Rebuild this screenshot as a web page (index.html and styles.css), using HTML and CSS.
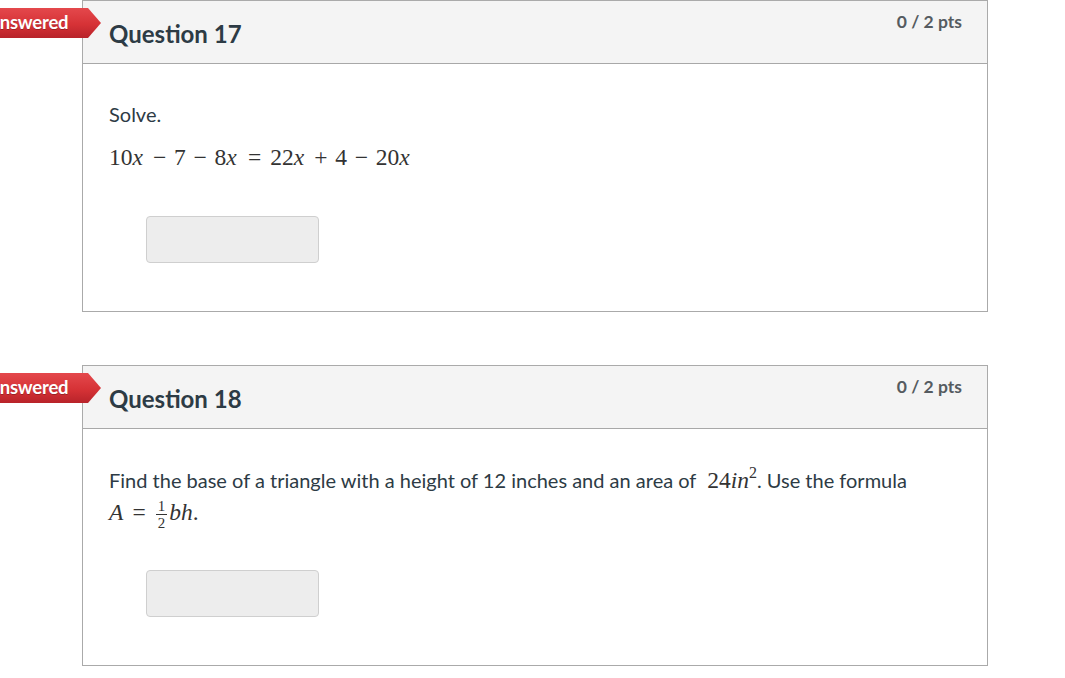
FILE: index.html
```html
<!DOCTYPE html>
<html>
<head>
<meta charset="utf-8">
<link rel="stylesheet" href="styles.css">
</head>
<body>
<div class="quiz">
  <div class="question">
    <div class="flag"><span>Unanswered</span></div>
    <div class="q-header">
      <h2 class="q-title">Question 17</h2>
      <div class="q-points">0 / 2 pts</div>
    </div>
    <div class="q-body">
      <p class="q-text">Solve.</p>
      <p class="math-line"><span class="math">10<i class="v">x</i><span class="bin">−</span>7<span class="bin">−</span>8<i class="v">x</i><span class="rel">=</span>22<i class="v">x</i><span class="bin">+</span>4<span class="bin">−</span>20<i class="v">x</i></span></p>
      <div class="answer"></div>
    </div>
  </div>

  <div class="question">
    <div class="flag"><span>Unanswered</span></div>
    <div class="q-header">
      <h2 class="q-title">Question 18</h2>
      <div class="q-points">0 / 2 pts</div>
    </div>
    <div class="q-body">
      <p class="q-text q-text-tall">Find the base of a triangle with a height of 12 inches and an area of <span class="math inline">24<i>in</i><sup>2</sup></span>. Use the formula<br><span class="math"><i>A</i><span class="rel">=</span><span class="frac"><span class="num">1</span><span class="den">2</span></span><i>bh</i>.</span></p>
      <div class="answer answer2"></div>
    </div>
  </div>
</div>
</body>
</html>
```

FILE: styles.css
```css
html, body {
  margin: 0;
  padding: 0;
  background: #ffffff;
}

body {
  font-family: Lato, "Open Sans", "Liberation Sans", sans-serif;
  color: #2d3b45;
  overflow: hidden;
}

.quiz {
  padding-left: 82px;
  width: 906px;
  display: flex;
  flex-direction: column;
  gap: 53px;
}

.question {
  position: relative;
  border: 1px solid #aaaaaa;
  background: #fff;
}

.flag {
  position: absolute;
  top: 7px;
  left: -126px;
  width: 144px;
  height: 30px;
  background: linear-gradient(to bottom, #e4484c 0%, #d63236 55%, #b8232a 100%);
  clip-path: polygon(0 0, calc(100% - 13px) 0, 100% 50%, calc(100% - 13px) 100%, 0 100%);
  display: flex;
  align-items: center;
  z-index: 2;
}

.flag span {
  padding-left: 10px;
  color: #fff;
  font-weight: 700;
  font-size: 18.5px;
  letter-spacing: -0.2px;
  text-shadow: 0 1px 0 rgba(0, 0, 0, 0.25);
  line-height: 1;
  margin-top: -2px;
}

.q-header {
  height: 63px;
  box-sizing: border-box;
  background: #f4f4f4;
  border-bottom: 1px solid #a8a8a8;
  display: flex;
  justify-content: space-between;
  align-items: flex-start;
  padding: 11px 25px 0 26px;
}

.q-title {
  margin: 0;
  padding-top: 7px;
  font-size: 24px;
  line-height: 30px;
  font-weight: 700;
  color: #2d3b45;
}

.q-points {
  font-size: 17.5px;
  line-height: 20px;
  font-weight: 700;
  color: #555b60;
}

.q-body {
  padding: 35px 26px 48px 26px;
}

.q-text {
  margin: 0;
  font-size: 20px;
  line-height: 30px;
  color: #2d3b45;
}

.q-text-tall {
  line-height: 32px;
}

.math-line {
  margin: 13px 0 0 0;
  height: 30px;
  line-height: 30px;
}

.math {
  font-family: "Liberation Serif", "DejaVu Serif", serif;
  font-size: 23.5px;
  color: #333;
  white-space: nowrap;
}

.math i {
  font-style: italic;
}

.math i.v {
  padding-right: 0.1em;
}

.bin, .rel {
  display: inline-block;
  width: 0.778em;
  text-align: center;
  margin: 0 0.222em;
}

.rel {
  margin: 0 0.278em;
}

.math.inline {
  margin-left: 6px;
}

.math sup {
  font-size: 16px;
  line-height: 0;
  vertical-align: 10px;
  font-style: normal;
}

.frac {
  display: inline-flex;
  flex-direction: column;
  align-items: center;
  vertical-align: 9px;
  font-size: 15px;
  line-height: 14px;
  margin: 0 2px 0 1px;
}

.frac .num {
  border-bottom: 1px solid #333;
  padding: 0 2px 1px;
}

.frac .den {
  padding-top: 1px;
}

.answer {
  margin: 44px 0 0 37px;
  width: 173px;
  height: 47px;
  box-sizing: border-box;
  background: #ededed;
  border: 1px solid #cfcfcf;
  border-radius: 4px;
}

.answer2 {
  margin-top: 40px;
}
```
